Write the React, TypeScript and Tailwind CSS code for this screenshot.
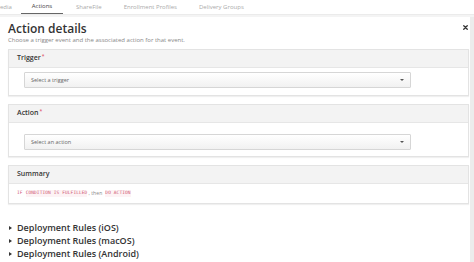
const tabs = ["ShareFile", "Enrollment Profiles", "Delivery Groups"]

function Card({ title, required, children }: { title: string; required?: boolean; children: React.ReactNode }) {
  return (
    <div className="border border-[#e3e3e3] bg-white shadow-[0_1px_1px_rgba(0,0,0,0.06)]">
      <div className="h-[18px] bg-[#f3f3f3] border-b border-[#e6e6e6] flex items-center pl-[8px] text-[7px] font-semibold text-[#333]">
        {title}
        {required && <span className="text-[#e0556a] text-[5px] -mt-[3px] ml-[1px]">*</span>}
      </div>
      {children}
    </div>
  )
}

function Select({ placeholder }: { placeholder: string }) {
  return (
    <div className="ml-[15px] w-[387px] h-[16px] border border-[#d6d6d6] rounded-[1px] bg-gradient-to-b from-white to-[#f1f1f1] flex items-center justify-between px-[6px]">
      <span className="text-[5.5px] text-[#666]">{placeholder}</span>
      <span className="w-0 h-0 border-l-[2px] border-r-[2px] border-t-[2px] border-l-transparent border-r-transparent border-t-[#555]" />
    </div>
  )
}

export default function App() {
  return (
    <div className="w-[474px] h-[262px] overflow-hidden bg-white font-['Open_Sans',sans-serif] relative">
      <div className="h-[15px] flex items-center border-b border-[#ebebeb] text-[6px] text-[#aaa] whitespace-nowrap">
        <div className="w-[21px] h-full flex items-center">edia</div>
        <div className="w-[42px] h-full flex items-center justify-center text-[#444] border-b-[1.5px] border-[#666]">Actions</div>
        {tabs.map((t, i) => (
          <div key={t} className={i === 0 ? "ml-[13px] h-full flex items-center" : "ml-[22px] h-full flex items-center"}>
            {t}
          </div>
        ))}
      </div>
      <div className="h-[2px] bg-[#f4f4f4]" />
      <div className="relative pr-[1px] border-r-[4px] border-[#ececec] h-full">
        <svg className="absolute right-[2px] top-[8px] w-[5px] h-[5px]" viewBox="0 0 10 10">
          <path d="M1.5 1.5 L8.5 8.5 M8.5 1.5 L1.5 8.5" stroke="#333" strokeWidth={2.6} strokeLinecap="round" />
        </svg>
        <div className="pl-[8px] pt-[4px]">
          <h1 className="text-[12px] leading-[15px] font-semibold text-[#333]">Action details</h1>
          <p className="text-[6px] leading-[8px] text-[#888]">Choose a trigger event and the associated action for that event.</p>
          <div className="mt-[5px] flex flex-col gap-[8px]">
            <Card title="Trigger" required>
              <div className="pt-[4px] pb-[7px]">
                <Select placeholder="Select a trigger" />
              </div>
            </Card>
            <Card title="Action" required>
              <div className="pt-[11px] pb-[6px]">
                <Select placeholder="Select an action" />
              </div>
            </Card>
            <Card title="Summary">
              <div className="h-[19px] flex items-center pl-[8px] font-['DejaVu_Sans_Mono',monospace] text-[4.5px] tracking-[0.1px]">
                <span className="text-[#d05a74]">IF</span>
                <span className="text-[#d05a74] bg-[#fdf3f5] ml-[3px]">CONDITION IS FULFILLED</span>
                <span className="text-[#888] font-['Open_Sans',sans-serif] text-[5px] ml-[1px]">, then</span>
                <span className="text-[#d05a74] bg-[#fdf3f5] ml-[3px]">DO ACTION</span>
              </div>
            </Card>
          </div>
          <div className="mt-[17px] flex flex-col text-[9px] leading-[13px] font-semibold text-[#333]">
            {["Deployment Rules (iOS)", "Deployment Rules (macOS)", "Deployment Rules (Android)"].map((r) => (
              <div key={r} className="flex items-center">
                <span className="w-0 h-0 border-t-[2.5px] border-b-[2.5px] border-l-[3.5px] border-t-transparent border-b-transparent border-l-[#333] ml-[1px] mr-[5px]" />
                {r}
              </div>
            ))}
          </div>
        </div>
      </div>
    </div>
  )
}
